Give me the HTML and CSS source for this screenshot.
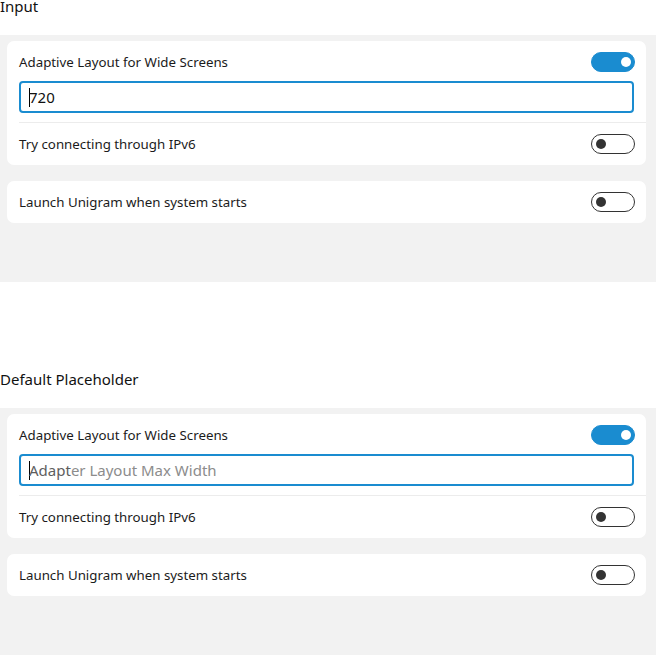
FILE: index.html
```html
<!DOCTYPE html>
<html lang="en">
<head>
<meta charset="utf-8">
<title>Input</title>
<link rel="stylesheet" href="styles.css">
</head>
<body>
<div class="page">
  <section class="demo">
    <h2 class="demo-title">Input</h2>
    <div class="panel">
      <div class="card card-main">
        <div class="row-head">
          <span class="label">Adaptive Layout for Wide Screens</span>
          <span class="toggle on"></span>
        </div>
        <div class="field"><span class="caret"></span><span class="value">720</span></div>
        <div class="divider"></div>
        <div class="row">
          <span class="label">Try connecting through IPv6</span>
          <span class="toggle"></span>
        </div>
      </div>
      <div class="card">
        <div class="row">
          <span class="label">Launch Unigram when system starts</span>
          <span class="toggle"></span>
        </div>
      </div>
    </div>
  </section>

  <section class="demo">
    <h2 class="demo-title">Default Placeholder</h2>
    <div class="panel">
      <div class="card card-main">
        <div class="row-head">
          <span class="label">Adaptive Layout for Wide Screens</span>
          <span class="toggle on"></span>
        </div>
        <div class="field"><span class="caret"></span><span class="ph-dark">Adapt</span><span class="ph">er Layout Max Width</span></div>
        <div class="divider"></div>
        <div class="row">
          <span class="label">Try connecting through IPv6</span>
          <span class="toggle"></span>
        </div>
      </div>
      <div class="card">
        <div class="row">
          <span class="label">Launch Unigram when system starts</span>
          <span class="toggle"></span>
        </div>
      </div>
    </div>
  </section>
</div>
</body>
</html>
```

FILE: styles.css
```css
html, body {
  margin: 0;
  padding: 0;
  background: #ffffff;
}

body {
  font-family: "Noto Sans", "Open Sans", sans-serif;
  color: #1b1b1b;
  font-size: 13.3px;
}

.page {
  margin-top: -4px;
}

.demo + .demo {
  margin-top: 87px;
}

.demo-title {
  margin: 0 0 19px 0;
  font-size: 15px;
  line-height: 20px;
  font-weight: 400;
  color: #111111;
}

.panel {
  width: 656px;
  height: 247px;
  box-sizing: border-box;
  background: #f2f2f2;
  padding: 6px 10px 0 7px;
  display: flex;
  flex-direction: column;
  gap: 16px;
}

.card {
  background: #ffffff;
  border-radius: 7px;
}

.card-main {
  padding-top: 11px;
}

.row-head {
  height: 20px;
  display: flex;
  align-items: center;
  justify-content: space-between;
  padding: 0 11px 0 12px;
}

.row {
  height: 42px;
  display: flex;
  align-items: center;
  justify-content: space-between;
  padding: 0 11px 0 12px;
}

.label {
  line-height: 20px;
}

.field {
  margin: 9px 12px 9px 12px;
  height: 32px;
  box-sizing: border-box;
  border: 2px solid #1a8cd0;
  border-radius: 4px;
  padding-left: 8px;
  font-size: 15px;
  line-height: 28px;
  display: flex;
  align-items: center;
}

.caret {
  display: inline-block;
  width: 1px;
  height: 19px;
  background: #000000;
  margin-right: -1px;
}

.value {
  color: #111111;
}

.ph-dark {
  color: #5e5e5e;
}

.ph {
  color: #8c8c8c;
}

.divider {
  height: 1px;
  background: #ececec;
  margin-left: 12px;
}

.toggle {
  position: relative;
  width: 44px;
  height: 20px;
  box-sizing: border-box;
  border: 1.5px solid #333333;
  border-radius: 10px;
  flex: none;
}

.toggle::after {
  content: "";
  position: absolute;
  left: 3.5px;
  top: 3.5px;
  width: 10px;
  height: 10px;
  border-radius: 50%;
  background: #333333;
}

.toggle.on {
  background: #1a8cd0;
  border-color: #1a8cd0;
}

.toggle.on::after {
  left: auto;
  right: 3px;
  background: #ffffff;
}
```
